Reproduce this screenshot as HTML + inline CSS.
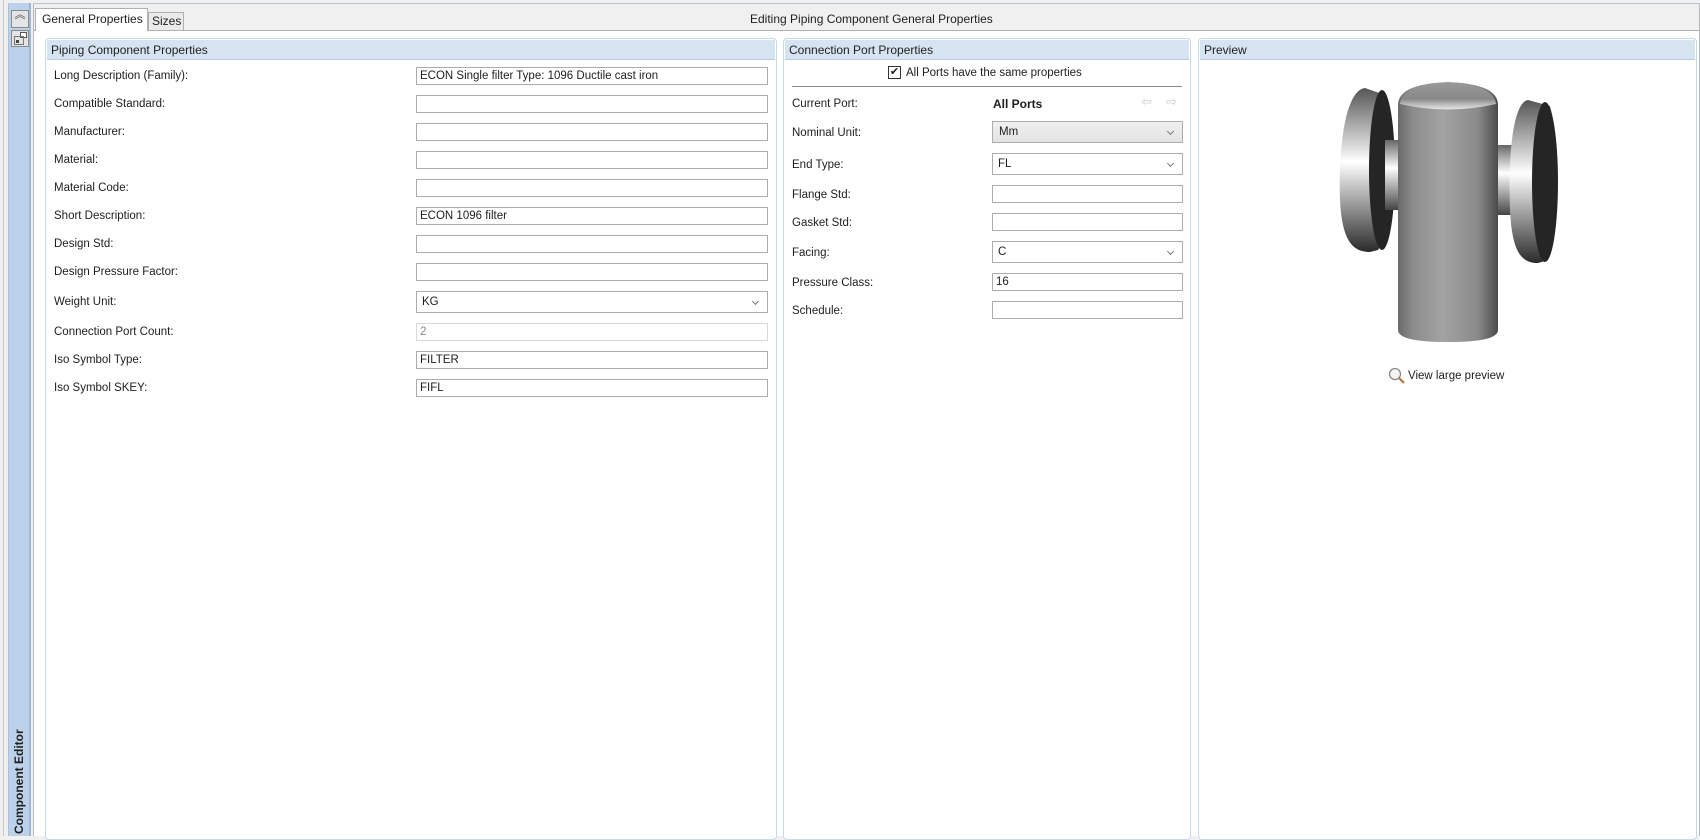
<!DOCTYPE html>
<html><head><meta charset="utf-8"><style>
*{box-sizing:border-box;margin:0;padding:0}
body{width:1700px;height:836px;overflow:hidden;background:#f0f0f0;font-family:"Liberation Sans",sans-serif;font-size:11.5px;color:#1e1e1e;position:relative}
.abs{position:absolute}
.lbl{position:absolute;white-space:nowrap;line-height:14px}
.inp{position:absolute;height:18px;border:1px solid #acacac;background:#fff;padding-left:3px;line-height:16px;white-space:nowrap}
.cmb{position:absolute;height:22px;border:1px solid #acacac;background:#fff;padding-left:5px;line-height:20px}
.cmb:after{content:"";position:absolute;right:9px;top:7px;width:4px;height:4px;border-right:1px solid #777;border-bottom:1px solid #777;transform:rotate(45deg)}
.panel{position:absolute;top:38px;bottom:-4px;border:1px solid #c5d8ec;border-radius:4px;background:#fff}
.hdr{position:absolute;left:1px;right:1px;top:1px;height:20px;background:#d6e4f2;border-bottom:1px solid #b8cde4;padding-left:4px;line-height:20px;font-size:12px}
</style></head><body>
<!-- left strip -->
<div class="abs" style="left:3px;top:0;width:1px;height:836px;background:#c8c8c8"></div>
<div class="abs" style="left:8px;top:3px;width:23px;height:833px;background:#bcd2ea;border-left:1px solid #a9c0dc;border-right:2px solid #9fb6d2"></div>
<div class="abs" style="left:11px;top:10px;width:18px;height:18px;border:1px solid #8a8a8a;background:#e4e4e4;text-align:center;font-size:11px;line-height:8px;color:#444">︽</div>
<div class="abs" style="left:11px;top:30px;width:18px;height:17px;border:1px solid #8a8a8a;background:#e4e4e4"><div class="abs" style="left:8px;top:1px;width:7px;height:6px;border:1px solid #555;background:#fff"></div><div class="abs" style="left:2px;top:5px;width:10px;height:9px;border:1px solid #777"></div><div class="abs" style="left:4px;top:9px;width:3px;height:3px;background:#444"></div></div>
<div class="abs" style="left:8px;top:836px;width:23px;transform-origin:0 0;transform:rotate(-90deg);white-space:nowrap;font-weight:bold;font-size:12px;line-height:23px;padding-left:2px;height:23px;width:110px">Component Editor</div>
<!-- top area -->
<div class="abs" style="left:33px;top:3px;right:0;height:1px;background:#b0c4dc"></div>
<div class="abs" style="left:33px;top:4px;width:1px;height:832px;background:#b8b8b8"></div>
<div class="abs" style="left:34px;top:30px;right:0;height:1px;background:#b0b0b0"></div>
<div class="abs" style="left:34px;top:31px;right:0;bottom:0;background:#fff"></div>
<div class="abs" style="left:35px;top:8px;width:113px;height:23px;background:#fff;border:1px solid #b0b0b0;border-bottom:none;padding-left:6px;line-height:20px;font-size:12px">General Properties</div>
<div class="abs" style="left:148px;top:12px;width:36px;height:18px;background:#ebebeb;border:1px solid #b0b0b0;border-bottom:none;padding-left:3px;line-height:17px;font-size:12px">Sizes</div>
<div class="abs" style="left:750px;top:12px;font-size:12px">Editing Piping Component General Properties</div>
<div class="abs" style="left:1699px;top:4px;width:1px;height:832px;background:#b8b8b8"></div>

<!-- Panel 1 -->
<div class="panel" style="left:45px;width:732px">
<div class="hdr">Piping Component Properties</div></div>
<div class="lbl" style="left:54px;top:69px">Long Description (Family):</div>
<div class="lbl" style="left:54px;top:97px">Compatible Standard:</div>
<div class="lbl" style="left:54px;top:125px">Manufacturer:</div>
<div class="lbl" style="left:54px;top:153px">Material:</div>
<div class="lbl" style="left:54px;top:181px">Material Code:</div>
<div class="lbl" style="left:54px;top:209px">Short Description:</div>
<div class="lbl" style="left:54px;top:237px">Design Std:</div>
<div class="lbl" style="left:54px;top:265px">Design Pressure Factor:</div>
<div class="lbl" style="left:54px;top:295px">Weight Unit:</div>
<div class="lbl" style="left:54px;top:325px">Connection Port Count:</div>
<div class="lbl" style="left:54px;top:353px">Iso Symbol Type:</div>
<div class="lbl" style="left:54px;top:381px">Iso Symbol SKEY:</div>
<div class="inp" style="left:416px;width:352px;top:67px">ECON Single filter Type: 1096 Ductile cast iron</div>
<div class="inp" style="left:416px;width:352px;top:95px"></div>
<div class="inp" style="left:416px;width:352px;top:123px"></div>
<div class="inp" style="left:416px;width:352px;top:151px"></div>
<div class="inp" style="left:416px;width:352px;top:179px"></div>
<div class="inp" style="left:416px;width:352px;top:207px">ECON 1096 filter</div>
<div class="inp" style="left:416px;width:352px;top:235px"></div>
<div class="inp" style="left:416px;width:352px;top:263px"></div>
<div class="cmb" style="left:416px;width:352px;top:291px">KG</div>
<div class="inp" style="left:416px;width:352px;top:323px;border-color:#d9d9d9;color:#888">2</div>
<div class="inp" style="left:416px;width:352px;top:351px">FILTER</div>
<div class="inp" style="left:416px;width:352px;top:379px">FIFL</div>

<!-- Panel 2 -->
<div class="panel" style="left:783px;width:408px">
<div class="hdr">Connection Port Properties</div></div>
<div class="abs" style="left:888px;top:66px;width:13px;height:13px;border:1px solid #333;background:#fff;font-size:11px;line-height:11px;text-align:center">✔</div>
<div class="lbl" style="left:906px;top:66px">All Ports have the same properties</div>
<div class="abs" style="left:792px;top:86px;width:390px;height:1px;background:#888"></div>
<div class="lbl" style="left:792px;top:97px">Current Port:</div>
<div class="lbl" style="left:993px;top:97px;font-weight:bold;font-size:12px">All Ports</div>
<div class="lbl" style="left:1141px;top:95px;color:#ccc;font-size:13px">⇦</div>
<div class="lbl" style="left:1166px;top:95px;color:#ccc;font-size:13px">⇨</div>
<div class="lbl" style="left:792px;top:126px">Nominal Unit:</div>
<div class="lbl" style="left:792px;top:158px">End Type:</div>
<div class="lbl" style="left:792px;top:188px">Flange Std:</div>
<div class="lbl" style="left:792px;top:216px">Gasket Std:</div>
<div class="lbl" style="left:792px;top:246px">Facing:</div>
<div class="lbl" style="left:792px;top:276px">Pressure Class:</div>
<div class="lbl" style="left:792px;top:304px">Schedule:</div>
<div class="cmb" style="left:992px;width:191px;top:121px;background:linear-gradient(#f0f0f0,#e3e3e3);padding-left:6px">Mm</div>
<div class="cmb" style="left:992px;width:191px;top:153px">FL</div>
<div class="inp" style="left:992px;width:191px;top:185px"></div>
<div class="inp" style="left:992px;width:191px;top:213px"></div>
<div class="cmb" style="left:992px;width:191px;top:241px">C</div>
<div class="inp" style="left:992px;width:191px;top:273px">16</div>
<div class="inp" style="left:992px;width:191px;top:301px"></div>

<!-- Panel 3 -->
<div class="panel" style="left:1198px;width:499px">
<div class="hdr">Preview</div></div>
<svg class="abs" style="left:1330px;top:75px" width="240" height="275" viewBox="1330 75 240 275">
<defs>
<linearGradient id="cyl" x1="0" x2="1"><stop offset="0" stop-color="#6a6a6a"/><stop offset=".15" stop-color="#8c8c8c"/><stop offset=".45" stop-color="#a3a3a3"/><stop offset=".8" stop-color="#8a8a8a"/><stop offset="1" stop-color="#4a4a4a"/></linearGradient>
<linearGradient id="rim" x1="0" y1="0" x2="0" y2="1"><stop offset="0" stop-color="#555"/><stop offset=".45" stop-color="#fff"/><stop offset="1" stop-color="#2a2a2a"/></linearGradient>
<linearGradient id="neck" x1="0" y1="0" x2="0" y2="1"><stop offset="0" stop-color="#666"/><stop offset=".4" stop-color="#fff"/><stop offset="1" stop-color="#444"/></linearGradient>
<linearGradient id="top" x1="0" y1="0" x2="0" y2="1"><stop offset="0" stop-color="#999"/><stop offset=".6" stop-color="#888"/><stop offset="1" stop-color="#e8e8e8"/></linearGradient>
</defs>
<!-- left flange -->
<path d="M1365 88 C1345 90 1338 150 1340 200 C1342 240 1352 252 1370 252 L1378 250 C1392 230 1395 140 1385 95 Z" fill="url(#rim)"/>
<ellipse cx="1382" cy="170" rx="13" ry="80" fill="#252525"/>
<rect x="1385" y="140" width="20" height="70" fill="url(#neck)"/>
<!-- right flange -->
<rect x="1495" y="145" width="22" height="70" fill="url(#neck)"/>
<path d="M1528 100 C1512 103 1508 160 1510 210 C1512 250 1520 263 1538 263 L1545 261 C1560 240 1562 150 1550 106 Z" fill="url(#rim)"/>
<ellipse cx="1545" cy="182" rx="13" ry="80" fill="#252525"/>
<!-- cylinder -->
<path d="M1398 105 Q1398 84 1448 82 Q1498 84 1498 105 L1498 330 Q1498 342 1448 342 Q1398 342 1398 330 Z" fill="url(#cyl)"/>
<path d="M1400 104 Q1402 84 1448 83 Q1494 84 1496 104 Q1448 115 1400 104 Z" fill="url(#top)"/>
</svg>
<svg class="abs" style="left:1388px;top:367px" width="18" height="18" viewBox="0 0 18 18"><circle cx="7" cy="7" r="5.5" fill="#f4f4f4" stroke="#8a8a8a" stroke-width="1.3"/><path d="M11 11 L16 16" stroke="#b07a40" stroke-width="2.2"/></svg>
<div class="lbl" style="left:1408px;top:369px">View large preview</div>
</body></html>
